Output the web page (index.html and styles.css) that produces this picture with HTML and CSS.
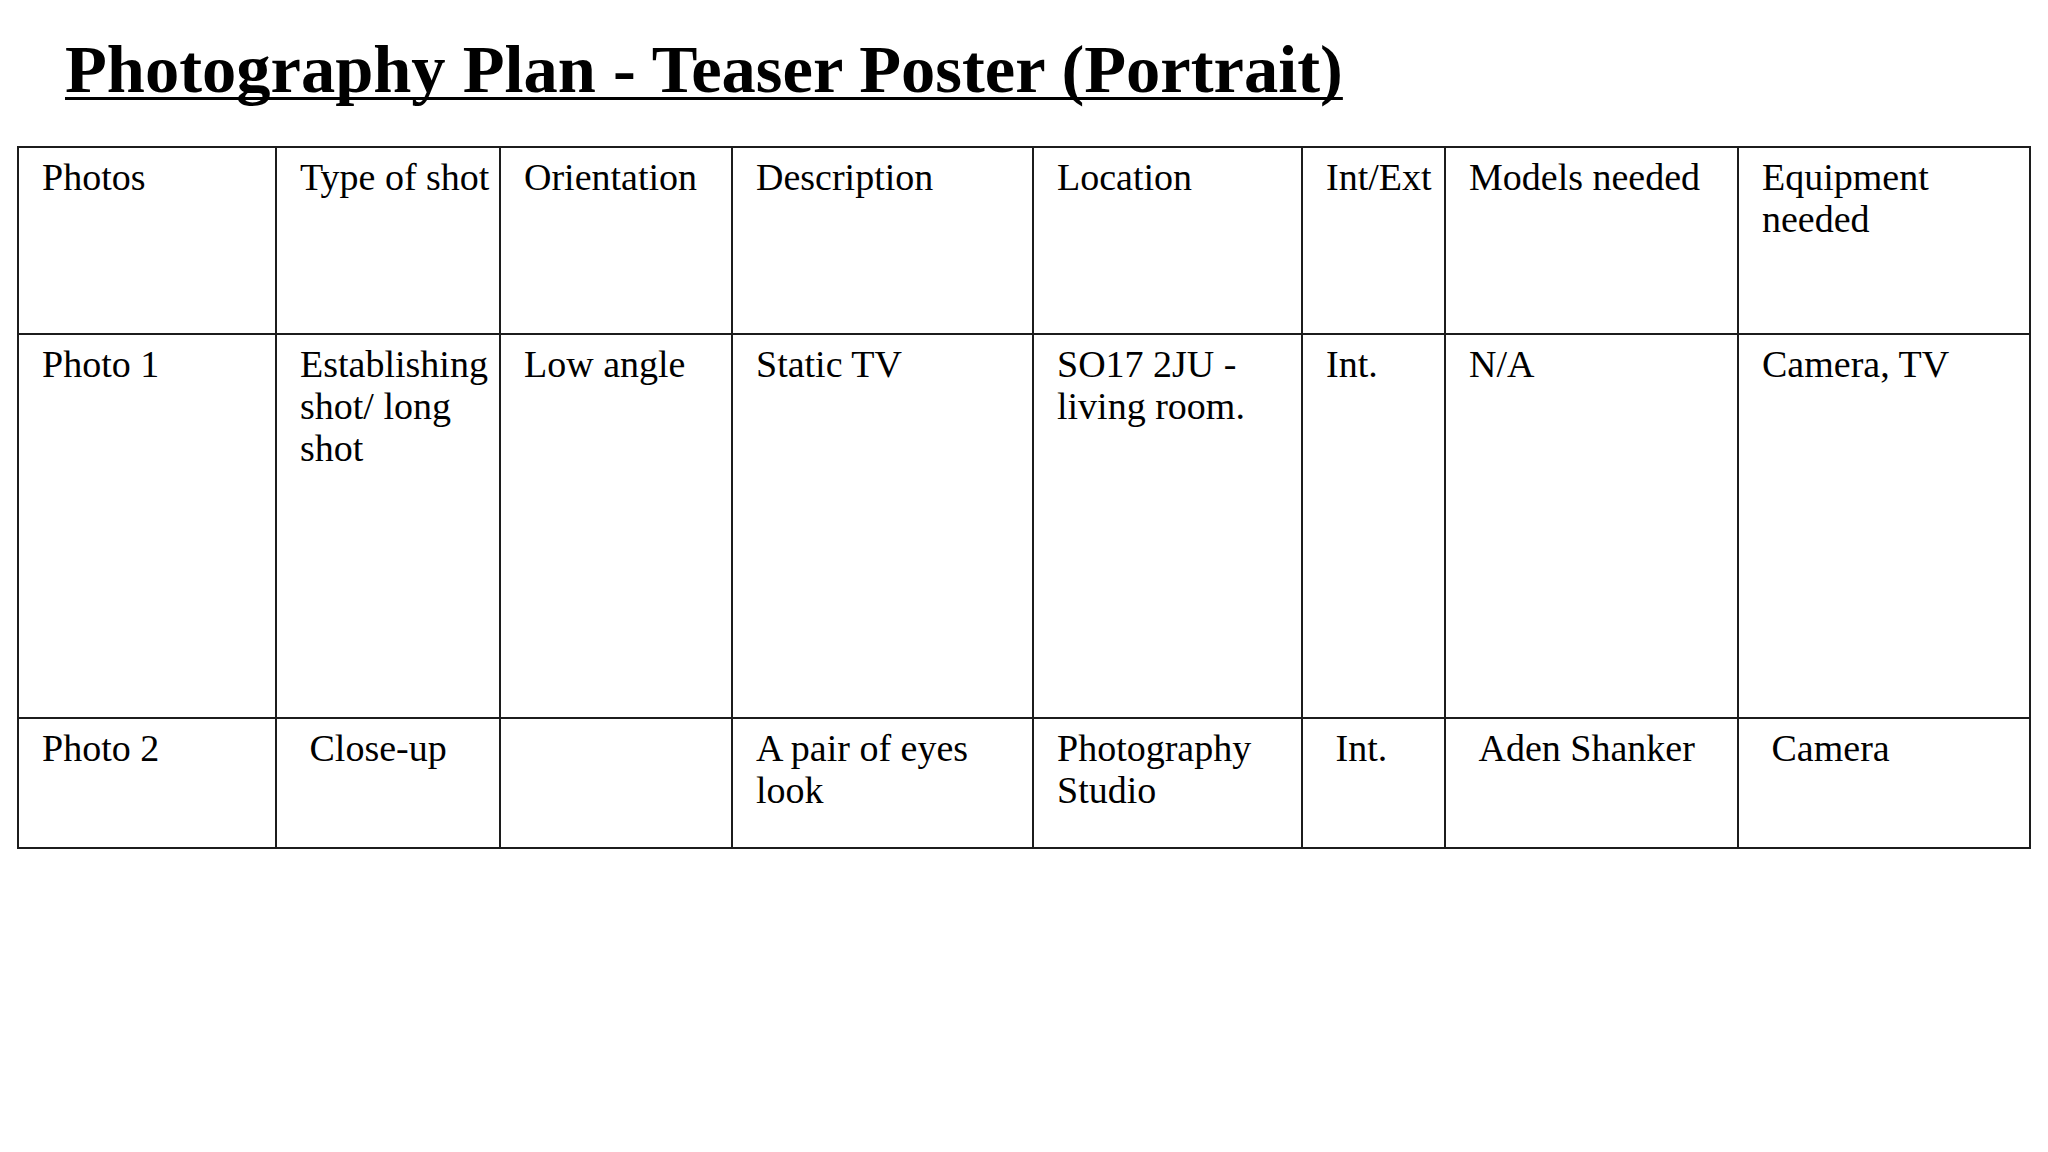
FILE: index.html
```html
<!DOCTYPE html>
<html>
<head>
<meta charset="utf-8">
<link rel="stylesheet" href="styles.css">
</head>
<body>
<h1 class="title">Photography Plan - Teaser Poster (Portrait)</h1>
<table class="plan">
  <colgroup>
    <col class="c1"><col class="c2"><col class="c3"><col class="c4"><col class="c5"><col class="c6"><col class="c7"><col class="c8">
  </colgroup>
  <tr class="r-head">
    <td>Photos</td>
    <td>Type of shot</td>
    <td>Orientation</td>
    <td>Description</td>
    <td>Location</td>
    <td>Int/Ext</td>
    <td>Models needed</td>
    <td>Equipment needed</td>
  </tr>
  <tr class="r-one">
    <td>Photo 1</td>
    <td>Establishing shot/ long shot</td>
    <td>Low angle</td>
    <td>Static TV</td>
    <td>SO17 2JU - living room.</td>
    <td>Int.</td>
    <td>N/A</td>
    <td>Camera, TV</td>
  </tr>
  <tr class="r-two">
    <td>Photo 2</td>
    <td>&nbsp;Close-up</td>
    <td></td>
    <td>A pair of eyes look</td>
    <td>Photography Studio</td>
    <td>&nbsp;Int.</td>
    <td>&nbsp;Aden Shanker</td>
    <td>&nbsp;Camera</td>
  </tr>
</table>
</body>
</html>
```
FILE: styles.css
```css
html, body {
  margin: 0;
  padding: 0;
  background: #ffffff;
}
body {
  width: 2048px;
  height: 1152px;
  overflow: hidden;
  font-family: "Liberation Serif", "Times New Roman", serif;
  color: #000000;
}
.title {
  margin: 31px 0 0 65px;
  font-size: 68.5px;
  font-weight: bold;
  line-height: 77px;
  text-decoration: underline;
  text-decoration-thickness: 3px;
  text-underline-offset: 5px;
  text-decoration-skip-ink: none;
}
.plan {
  margin: 38px 0 0 17px;
  border-collapse: collapse;
  table-layout: fixed;
  width: 2014px;
  font-size: 38px;
  line-height: 42px;
}
.plan td {
  border: 2px solid #1c1c1c;
  vertical-align: top;
  padding: 8px 6px 0 23px;
  overflow: hidden;
}
.c1 { width: 258px; }
.c2 { width: 224px; }
.c3 { width: 232px; }
.c4 { width: 301px; }
.c5 { width: 269px; }
.c6 { width: 143px; }
.c7 { width: 293px; }
.c8 { width: 292px; }
.r-head { height: 187px; }
.r-one { height: 384px; }
.r-two { height: 130px; }
```
